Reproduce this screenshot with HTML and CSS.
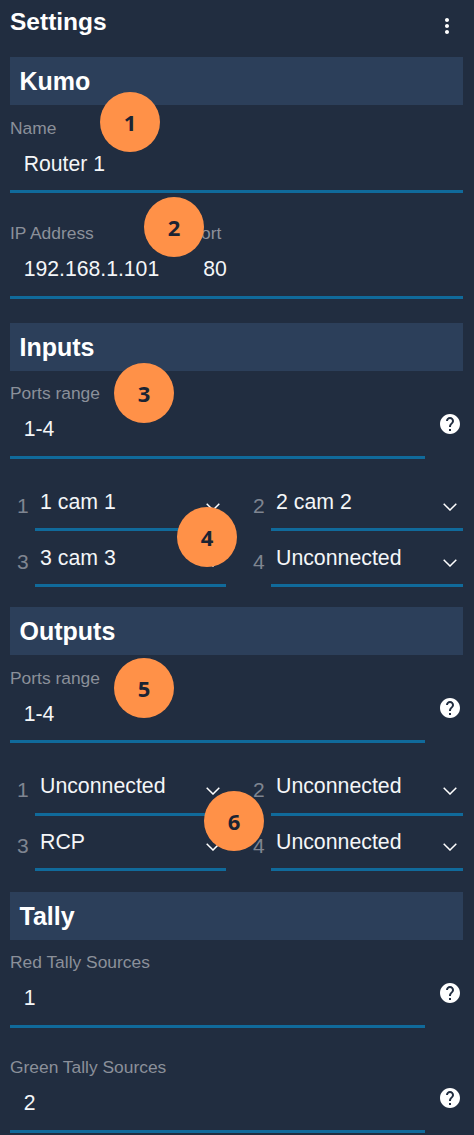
FILE: index.html
```html
<!DOCTYPE html>
<html lang="en">
<head>
<meta charset="utf-8">
<title>Settings</title>
<link rel="stylesheet" href="styles.css">
</head>
<body>
<main class="page">
  <header class="topbar">
    <h1 class="title">Settings</h1>
    <svg class="kebab" viewBox="0 0 24 24" width="24" height="24"><path d="M12 8c1.1 0 2-.9 2-2s-.9-2-2-2-2 .9-2 2 .9 2 2 2zm0 2c-1.100 0-2 .9-2 2s.9 2 2 2 2-.9 2-2-.9-2-2-2zm0 6c-1.100 0-2 .9-2 2s.9 2 2 2 2-.9 2-2-.9-2-2-2z"/></svg>
  </header>

  <section class="section section-kumo">
    <h2 class="section-head">Kumo</h2>
    <div class="field">
      <div class="label">Name</div>
      <div class="value">Router 1</div>
    </div>
    <div class="field-pair">
      <div class="pair-col pair-ip">
        <div class="label">IP Address</div>
        <div class="value">192.168.1.101</div>
      </div>
      <div class="pair-col">
        <div class="label">Port</div>
        <div class="value">80</div>
      </div>
    </div>
  </section>

  <section class="section">
    <h2 class="section-head">Inputs</h2>
    <div class="help-row">
      <div class="field">
        <div class="label">Ports range</div>
        <div class="value">1-4</div>
      </div>
      <svg class="help" viewBox="0 0 24 24" width="24" height="24"><path d="M12 2C6.480 2 2 6.480 2 12s4.480 10 10 10 10-4.480 10-10S17.520 2 12 2zm1 17h-2v-2h2v2zm2.070-7.750l-.9.920C13.450 12.900 13 13.500 13 15h-2v-.5c0-1.100.45-2.100 1.170-2.830l1.240-1.260c.37-.36.59-.86.59-1.410 0-1.100-.9-2-2-2s-2 .9-2 2H8c0-2.210 1.790-4 4-4s4 1.790 4 4c0 .88-.36 1.680-.93 2.250z"/></svg>
    </div>
    <div class="ports">
      <div class="port"><span class="port-num">1</span><div class="select"><span>1 cam 1</span><svg class="chev" viewBox="0 0 14 8" width="14" height="8"><path d="M.7.7 7 7 13.300.7"/></svg></div></div>
      <div class="port"><span class="port-num">2</span><div class="select"><span>2 cam 2</span><svg class="chev" viewBox="0 0 14 8" width="14" height="8"><path d="M.7.7 7 7 13.300.7"/></svg></div></div>
      <div class="port"><span class="port-num">3</span><div class="select"><span>3 cam 3</span><svg class="chev" viewBox="0 0 14 8" width="14" height="8"><path d="M.7.7 7 7 13.300.7"/></svg></div></div>
      <div class="port"><span class="port-num">4</span><div class="select"><span>Unconnected</span><svg class="chev" viewBox="0 0 14 8" width="14" height="8"><path d="M.7.7 7 7 13.300.7"/></svg></div></div>
    </div>
  </section>

  <section class="section">
    <h2 class="section-head">Outputs</h2>
    <div class="help-row">
      <div class="field">
        <div class="label">Ports range</div>
        <div class="value">1-4</div>
      </div>
      <svg class="help" viewBox="0 0 24 24" width="24" height="24"><path d="M12 2C6.480 2 2 6.480 2 12s4.480 10 10 10 10-4.480 10-10S17.520 2 12 2zm1 17h-2v-2h2v2zm2.070-7.750l-.9.920C13.450 12.900 13 13.500 13 15h-2v-.5c0-1.100.45-2.100 1.170-2.830l1.240-1.260c.37-.36.59-.86.59-1.410 0-1.100-.9-2-2-2s-2 .9-2 2H8c0-2.210 1.790-4 4-4s4 1.790 4 4c0 .88-.36 1.680-.93 2.250z"/></svg>
    </div>
    <div class="ports">
      <div class="port"><span class="port-num">1</span><div class="select"><span>Unconnected</span><svg class="chev" viewBox="0 0 14 8" width="14" height="8"><path d="M.7.7 7 7 13.300.7"/></svg></div></div>
      <div class="port"><span class="port-num">2</span><div class="select"><span>Unconnected</span><svg class="chev" viewBox="0 0 14 8" width="14" height="8"><path d="M.7.7 7 7 13.300.7"/></svg></div></div>
      <div class="port"><span class="port-num">3</span><div class="select"><span>RCP</span><svg class="chev" viewBox="0 0 14 8" width="14" height="8"><path d="M.7.7 7 7 13.300.7"/></svg></div></div>
      <div class="port"><span class="port-num">4</span><div class="select"><span>Unconnected</span><svg class="chev" viewBox="0 0 14 8" width="14" height="8"><path d="M.7.7 7 7 13.300.7"/></svg></div></div>
    </div>
  </section>

  <section class="section">
    <h2 class="section-head">Tally</h2>
    <div class="help-row">
      <div class="field">
        <div class="label">Red Tally Sources</div>
        <div class="value">1</div>
      </div>
      <svg class="help" viewBox="0 0 24 24" width="24" height="24"><path d="M12 2C6.480 2 2 6.480 2 12s4.480 10 10 10 10-4.480 10-10S17.520 2 12 2zm1 17h-2v-2h2v2zm2.070-7.750l-.9.920C13.450 12.900 13 13.500 13 15h-2v-.5c0-1.100.45-2.100 1.170-2.830l1.240-1.260c.37-.36.59-.86.59-1.410 0-1.100-.9-2-2-2s-2 .9-2 2H8c0-2.210 1.790-4 4-4s4 1.790 4 4c0 .88-.36 1.680-.93 2.250z"/></svg>
    </div>
    <div class="help-row help-row-next">
      <div class="field">
        <div class="label">Green Tally Sources</div>
        <div class="value">2</div>
      </div>
      <svg class="help" viewBox="0 0 24 24" width="24" height="24"><path d="M12 2C6.480 2 2 6.480 2 12s4.480 10 10 10 10-4.480 10-10S17.520 2 12 2zm1 17h-2v-2h2v2zm2.070-7.750l-.9.920C13.450 12.900 13 13.500 13 15h-2v-.5c0-1.100.45-2.100 1.170-2.830l1.240-1.260c.37-.36.59-.86.59-1.410 0-1.100-.9-2-2-2s-2 .9-2 2H8c0-2.210 1.790-4 4-4s4 1.790 4 4c0 .88-.36 1.680-.93 2.250z"/></svg>
    </div>
  </section>

  <div class="badge badge-1">1</div>
  <div class="badge badge-2">2</div>
  <div class="badge badge-3">3</div>
  <div class="badge badge-4">4</div>
  <div class="badge badge-5">5</div>
  <div class="badge badge-6">6</div>
</main>
</body>
</html>
```
FILE: styles.css
```css
* { box-sizing: border-box; }

html, body {
  margin: 0;
  padding: 0;
  background: #212d40;
}

body {
  height: 1135px;
  overflow: hidden;
  font-family: "Liberation Sans", Arial, sans-serif;
  color: #fff;
}

.page {
  position: relative;
  padding: 0 11px 0 10px;
  height: 1135px;
  overflow: hidden;
}

.topbar {
  display: flex;
  justify-content: space-between;
  height: 57.2px;
  padding-top: 7px;
}

.title {
  margin: 0;
  font-size: 24.5px;
  line-height: 30px;
  font-weight: 700;
}

.kebab {
  fill: #fff;
  margin: 7px 4px 0 0;
}

.section + .section { margin-top: 20.8px; }

.section-kumo { padding-bottom: 3.5px; }

.section-head {
  margin: 0;
  height: 48px;
  padding-left: 9.5px;
  background: #2c3f5a;
  font-size: 25px;
  line-height: 48px;
  font-weight: 700;
}

.field {
  flex: 1;
  padding-top: 11.4px;
  height: 88px;
  border-bottom: 3px solid #106a9b;
}

.label {
  font-size: 17.4px;
  line-height: 22px;
  color: #8b909a;
}

.value {
  margin-top: 13px;
  padding-left: 13.7px;
  font-size: 21.2px;
  line-height: 24px;
  color: #f4f6f8;
}

.field-pair {
  display: flex;
  margin-top: 17.5px;
  height: 88px;
  padding-top: 11.4px;
  border-bottom: 3px solid #106a9b;
}

.pair-ip { width: 179.500px; }

.help-row {
  display: flex;
  align-items: flex-end;
}

.help-row-next { margin-top: 17px; }

.help {
  flex: none;
  fill: #fff;
  margin: 0 1px 23px 13px;
}

.ports {
  display: grid;
  grid-template-columns: 216px 217px;
  column-gap: 20px;
  margin-top: 16.5px;
}

.port { display: flex; }

.port-num {
  width: 25px;
  padding: 18.5px 0 0 7px;
  font-size: 21px;
  line-height: 24px;
  color: #7f8591;
}

.select {
  flex: 1;
  display: flex;
  justify-content: space-between;
  height: 55.6px;
  padding: 14.5px 6px 0 5px;
  border-bottom: 3px solid #106a9b;
  font-size: 21.300px;
  line-height: 24px;
  color: #f4f6f8;
}

.chev {
  fill: none;
  stroke: #fff;
  stroke-width: 1.500;
  margin-top: 13px;
}

.badge {
  position: absolute;
  width: 60px;
  height: 60px;
  border-radius: 50%;
  background: #ff9148;
  color: #1b2433;
  font-family: "Open Sans", sans-serif;
  font-size: 22px;
  font-weight: 700;
  line-height: 60px;
  text-align: center;
}

.badge-1 { left: 100px; top: 92px; }
.badge-2 { left: 144px; top: 197px; }
.badge-3 { left: 114px; top: 363px; }
.badge-4 { left: 177px; top: 507px; }
.badge-5 { left: 114px; top: 658px; }
.badge-6 { left: 204px; top: 791px; }
```
